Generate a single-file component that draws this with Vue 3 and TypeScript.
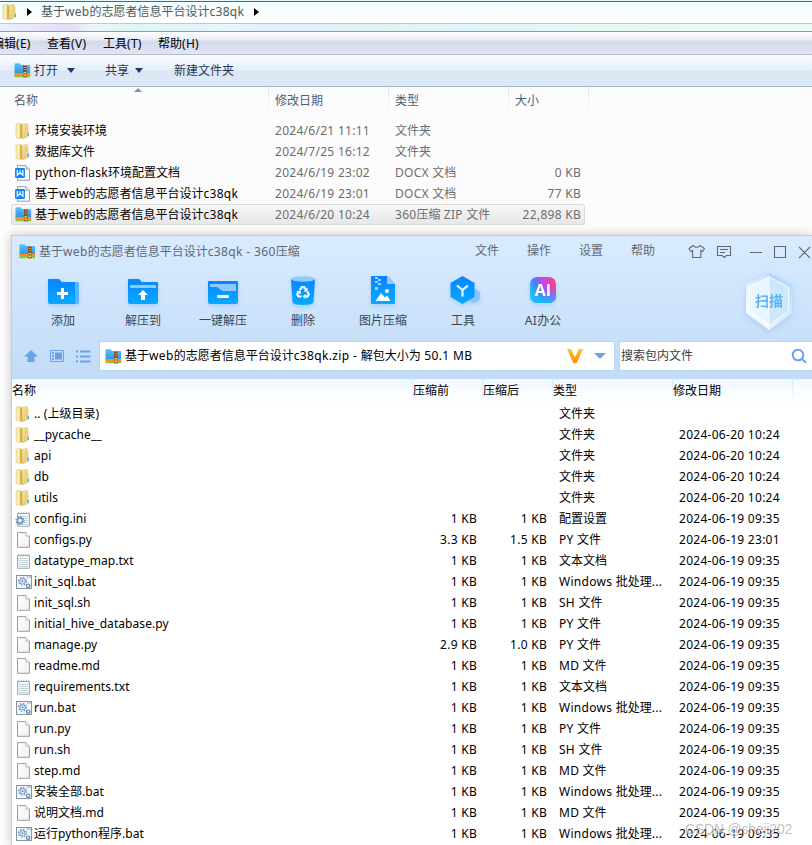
<script setup lang="ts">
import { h, type FunctionalComponent } from 'vue'

type IconKind = 'folder' | 'docx' | 'zip' | 'ini' | 'blank' | 'text' | 'bat'

interface FileRow {
  name: string
  date: string
  type: string
  size: string
  icon: IconKind
}

interface EntryRow {
  icon: IconKind
  name: string
  before: string
  after: string
  type: string
  date: string
}

// Splits a label into Latin and CJK runs so that each gets its own tracking.
const Txt: FunctionalComponent<{ t: string }> = (props) =>
  h(
    'span',
    { class: 'txt' },
    (props.t.match(/[\u2e80-\u9fff]+|[^\u2e80-\u9fff]+/g) ?? []).map((run) =>
      /[\u2e80-\u9fff]/.test(run) ? run : h('span', { class: 'lat' }, run),
    ),
  )
Txt.props = ['t']

const title = '基于web的志愿者信息平台设计c38qk'

const files: FileRow[] = [
  { name: '环境安装环境', date: '2024/6/21 11:11', type: '文件夹', size: '', icon: 'folder' },
  { name: '数据库文件', date: '2024/7/25 16:12', type: '文件夹', size: '', icon: 'folder' },
  { name: 'python-flask环境配置文档', date: '2024/6/19 23:02', type: 'DOCX 文档', size: '0 KB', icon: 'docx' },
  { name: title, date: '2024/6/19 23:01', type: 'DOCX 文档', size: '77 KB', icon: 'docx' },
  { name: title, date: '2024/6/20 10:24', type: '360压缩 ZIP 文件', size: '22,898 KB', icon: 'zip' },
]

const tools = ['添加', '解压到', '一键解压', '删除', '图片压缩', '工具', 'AI办公']

const dir = (name: string, date = '2024-06-20 10:24'): EntryRow => ({
  icon: 'folder', name, before: '', after: '', type: '文件夹', date,
})
const file = (
  icon: IconKind, name: string, type: string,
  before = '1 KB', after = '1 KB', date = '2024-06-19 09:35',
): EntryRow => ({ icon, name, before, after, type, date })

const entries: EntryRow[] = [
  dir('.. (上级目录)', ''),
  dir('__pycache__'),
  dir('api'),
  dir('db'),
  dir('utils'),
  file('ini', 'config.ini', '配置设置'),
  file('blank', 'configs.py', 'PY 文件', '3.3 KB', '1.5 KB', '2024-06-19 23:01'),
  file('text', 'datatype_map.txt', '文本文档'),
  file('bat', 'init_sql.bat', 'Windows 批处理...'),
  file('blank', 'init_sql.sh', 'SH 文件'),
  file('blank', 'initial_hive_database.py', 'PY 文件'),
  file('blank', 'manage.py', 'PY 文件', '2.9 KB', '1.0 KB'),
  file('blank', 'readme.md', 'MD 文件'),
  file('text', 'requirements.txt', '文本文档'),
  file('bat', 'run.bat', 'Windows 批处理...'),
  file('blank', 'run.py', 'PY 文件'),
  file('blank', 'run.sh', 'SH 文件'),
  file('blank', 'step.md', 'MD 文件'),
  file('bat', '安装全部.bat', 'Windows 批处理...'),
  file('blank', '说明文档.md', 'MD 文件'),
  file('bat', '运行python程序.bat', 'Windows 批处理...'),
]
</script>

<template>
  <svg class="defs" width="0" height="0">
    <defs>
      <linearGradient id="gold" x1="0" x2="1">
        <stop offset="0" stop-color="#f6e7a2" /><stop offset=".5" stop-color="#fbf0b8" /><stop offset="1" stop-color="#dcbd5e" />
      </linearGradient>
      <linearGradient id="gold2" x1="0" x2="1" y2="1">
        <stop offset="0" stop-color="#f7eaa8" /><stop offset="1" stop-color="#e0bd58" />
      </linearGradient>
      <linearGradient id="blue" x1="0" x2="0" y1="0" y2="1">
        <stop offset="0" stop-color="#0a84ff" /><stop offset="1" stop-color="#06aaff" />
      </linearGradient>
      <linearGradient id="sky" x1="0" x2="0" y1="0" y2="1">
        <stop offset="0" stop-color="#5cc2f8" /><stop offset="1" stop-color="#2b93e8" />
      </linearGradient>
      <linearGradient id="ai" x1="0" y1=".75" x2="1" y2=".25">
        <stop offset="0" stop-color="#18dcf0" /><stop offset=".38" stop-color="#4b7cf8" /><stop offset=".65" stop-color="#c944e6" /><stop offset="1" stop-color="#fb4382" />
      </linearGradient>
      <linearGradient id="aib" x1="0" y1="0" x2="0" y2="1">
        <stop offset=".45" stop-color="#1fa8ff" stop-opacity="0" /><stop offset="1" stop-color="#1cb8ff" />
      </linearGradient>
      <linearGradient id="vee" x1="0" x2="0" y1="0" y2="1">
        <stop offset="0" stop-color="#ffc52e" /><stop offset="1" stop-color="#ff8c00" />
      </linearGradient>
      <linearGradient id="hexa" x1="0" x2="1" y1="1" y2="0">
        <stop offset="0" stop-color="#ffffff" /><stop offset=".45" stop-color="#e4f2ff" /><stop offset="1" stop-color="#9ad2ff" />
      </linearGradient>
      <linearGradient id="hexb" x1="0" x2="0" y1="0" y2="1">
        <stop offset="0" stop-color="#a9d8fd" /><stop offset="1" stop-color="#e6f4ff" />
      </linearGradient>
      <linearGradient id="paper" x1="0" x2="1" y1="0" y2="1">
        <stop offset="0" stop-color="#fff" /><stop offset="1" stop-color="#f0f0f0" />
      </linearGradient>

      <symbol id="i-folder" viewBox="0 0 16 16">
        <path d="M1 1 5.500.2 6.500 1v13.700l-1 .8L1 14.600z" fill="url(#gold)" stroke="#dcc470" stroke-width=".5" />
        <path d="M5.300 1.500 8 2.600v13.200l-2.700-1.100z" fill="#cdab4b" />
        <path d="M7 1.400 12.300.6v12.600L8 15.700H7z" fill="url(#gold2)" stroke="#d6b75a" stroke-width=".5" />
        <path d="M10.300 3.200 13.500 2.700v11l-3.500 1.500z" fill="#ecd27c" />
        <path d="M12.700 9.700h1.200v3.300h-1.200z" fill="#36a6e8" />
      </symbol>
      <symbol id="i-docx" viewBox="0 0 16 16">
        <path d="M2.500.7h8.500l3.500 3.500v11H2.500z" fill="#fff" stroke="#8e98ad" stroke-linejoin="round" />
        <path d="M11 .7v3.500h3.500" fill="#dfe4ee" stroke="#8e98ad" stroke-width=".8" />
        <rect x="0" y="3" width="10" height="10" rx="1.2" fill="#1687f2" />
        <path d="M2.300 5v5.200l2.800-2.400 2.800 2.400V5M5.100 5.300v2.600" fill="none" stroke="#fff" stroke-width="1.200" />
      </symbol>
      <symbol id="i-zip" viewBox="0 0 17 15">
        <path d="M.5 1.300Q.5.3 1.500.3h4l1.600 1.800h8q1 0 1 1V11H.5z" fill="url(#sky)" />
        <path d="M.5 10h15.600v2H.5z" fill="#ff8b22" /><path d="M.5 12h15.600v2.300H.5z" fill="#8cc63a" />
        <path d="M9.200 2.100h3.300v12.200H9.200z" fill="#80441c" />
        <path d="M10.200 2.500h1.500M10.200 4.500h1.500M10.200 6.500h1.500" stroke="#e6a657" />
        <rect x="9.200" y="8.700" width="3.300" height="4.800" rx="1.200" fill="#f7d06b" stroke="#8a5a20" stroke-width=".6" />
        <path d="M10.900 10v2" stroke="#72410e" stroke-width=".9" />
      </symbol>
      <symbol id="i-blank" viewBox="0 0 16 16">
        <path d="M2.500.6h8.400l3.500 3.500v11.200H2.500z" fill="url(#paper)" stroke="#9b9b9b" />
        <path d="M10.900.8v3.300h3.300" fill="#fff" stroke="#b4b4b4" stroke-width=".9" />
      </symbol>
      <symbol id="i-text" viewBox="0 0 16 16">
        <path d="M2.500 2.500h12v12.800h-12z" fill="#f7fafc" stroke="#a4a9ac" />
        <path d="M3.500 5.500h10M3.500 7.500h10M3.500 9.500h10M3.500 11.500h10M3.500 13.500h10" stroke="#c3d3dc" />
        <path d="M3 3.200l1-2.400M5.500 3.200l1-2.400M8 3.200l1-2.400M10.500 3.200l1-2.400M13 3.200l.8-2" stroke="#9da2a6" stroke-width=".8" />
      </symbol>
      <symbol id="i-ini" viewBox="0 0 16 16">
        <use href="#i-text" width="16" height="16" />
        <circle cx="5" cy="9.500" r="2.600" fill="#dcebf5" stroke="#7d9dbc" stroke-width="1.700" />
        <circle cx="5" cy="9.500" r="4" fill="none" stroke="#5f87ad" stroke-width="1.100" stroke-dasharray="1.500 1.640" />
        <circle cx="5" cy="9.500" r="1.100" fill="#fff" />
      </symbol>
      <symbol id="i-bat" viewBox="0 0 16 14">
        <rect x=".5" y=".5" width="15" height="13" fill="#f4f8fb" stroke="#8796a3" />
        <path d="M11 2h4" stroke="#4a7aa8" stroke-dasharray="1 .7" />
        <circle cx="6.500" cy="6.300" r="2.700" fill="#fff" stroke="#7fa6c9" stroke-width="1.200" />
        <circle cx="6.500" cy="6.300" r="4" fill="none" stroke="#6a96bd" stroke-width="1.100" stroke-dasharray="1.500 1.640" />
        <circle cx="6.500" cy="6.300" r="1" fill="#4c7dab" />
        <circle cx="12.200" cy="10.700" r="1.700" fill="#fff" stroke="#4d80ae" stroke-width="1.200" />
      </symbol>
    </defs>
  </svg>

  <main class="screen">
    <nav class="address">
      <svg class="ico16" viewBox="0 0 16 16"><use href="#i-folder" /></svg>
      <i class="tri-r"></i>
      <Txt class="crumb" :t="title" />
      <i class="tri-r"></i>
    </nav>
    <div class="glass"></div>
    <nav class="menubar">
      <Txt t="编辑(E)" /><Txt t="查看(V)" /><Txt t="工具(T)" /><Txt t="帮助(H)" />
    </nav>
    <div class="commands">
      <svg class="zip" viewBox="0 0 17 15"><use href="#i-zip" /></svg>
      <span class="open">打开</span><i class="tri-d"></i>
      <span class="share">共享</span><i class="tri-d"></i>
      <span class="newdir">新建文件夹</span>
    </div>

    <section class="explorer">
      <div class="fhead">
        <span>名称<i class="sort"></i></span><span>修改日期</span><span>类型</span><span>大小</span>
      </div>
      <div v-for="(f, i) in files" :key="i" class="frow" :class="{ selected: i === 4 }">
        <svg v-if="f.icon === 'zip'" class="zip" viewBox="0 0 17 15"><use href="#i-zip" /></svg>
        <svg v-else class="ico16" viewBox="0 0 16 16"><use :href="'#i-' + f.icon" /></svg>
        <Txt class="fname" :t="f.name" />
        <Txt class="fdate" :t="f.date" />
        <Txt class="ftype" :t="f.type" />
        <Txt class="fsize" :t="f.size" />
      </div>
    </section>

    <section class="archive">
      <div class="chrome">
        <header class="titlebar">
          <svg class="zip" viewBox="0 0 17 15"><use href="#i-zip" /></svg>
          <Txt class="wtitle" :t="title + ' - 360压缩'" />
          <nav class="wmenu"><span>文件</span><span>操作</span><span>设置</span><span>帮助</span></nav>
          <svg class="wctl" width="123" height="16" viewBox="0 0 123 16" fill="none" stroke="#606a75" stroke-width="1.1">
            <path d="M5.200 1.500 1 4.500l1.800 3 1.800-1v7h8.200v-7l1.800 1 1.800-3-4.200-3c-1 2.400-6 2.400-7 0z" />
            <path d="M29.500 2.500h13v9h-4l-2.300 2-2-2h-4.700z M32 5.500h8M32 8.500h5" />
            <path d="M62 8.500h12M86.500 2.500h11v11h-11z M111 3l11 11M122 3l-11 11" />
          </svg>
        </header>

        <div class="tools">
          <div v-for="(t, i) in tools" :key="t" class="tool">
            <svg class="ticon" width="36" height="34" viewBox="0 0 36 34">
              <g v-if="i === 0">
                <path d="M29 7h4q1 0 1 1v19q0 2-2 2h-3z" fill="#59b4ff" />
                <path d="M3 5q0-1 1-1h10l3 3h12q1 0 1 1v21H5q-2 0-2-2z" fill="url(#blue)" />
                <path d="M17.500 13v11M12 18.500h11" stroke="#fff" stroke-width="3" />
              </g>
              <g v-else-if="i === 1">
                <path d="M3 5q0-1 1-1h10l3 3h15q1 0 1 1v19q0 2-2 2H5q-2 0-2-2z" fill="url(#blue)" />
                <path d="M5 13v-2q0-1 1-1h24q1 0 1 1v2z" fill="#8fcbff" />
                <path d="M18 15l5 5h-3v5h-4v-5h-3z" fill="#fff" />
              </g>
              <g v-else-if="i === 2">
                <path d="M3 7q0-1 1-1h28q1 0 1 1v20q0 2-2 2H5q-2 0-2-2z" fill="url(#blue)" />
                <path d="M5 9h25q1 0 1 1v6H19q-2 0-3.500-1.500T12 12H5z" fill="#8ccbff" />
                <rect x="12" y="20" width="12" height="3" rx="1" fill="#fff" />
              </g>
              <g v-else-if="i === 3">
                <path d="M6 4h24l-1.500 23q-.2 3-10.500 3T7.500 27z" fill="url(#blue)" />
                <ellipse cx="18" cy="4" rx="12" ry="2.800" fill="#8dcdfe" />
                <g fill="none" stroke="#fff" stroke-width="2.200">
                  <path d="M14.800 15l2-2.800h2.400l1.700 2.500" />
                  <path d="M22.300 16.500l1.500 2.700-1.200 2.300h-3" />
                  <path d="M16.500 21.500h-3l-1.300-2.200 1.500-2.600" />
                </g>
                <path d="M22.500 12.500v4h-4zM20.500 18.800v5.200l-3-2.600zM11.200 16.400l4-.9 1 3.700z" fill="#fff" />
              </g>
              <g v-else-if="i === 4">
                <path d="M6 2q0-1 1-1h15l8 8v19q0 1-1 1H7q-1 0-1-1z" fill="url(#blue)" />
                <path d="M22 1l8 8h-8z" fill="#8ecbff" />
                <path d="M10 2h3v2h3v2h-3v2h3v2h-3V8h-3V6h3V4h-3zM10 12h3v3h-3z" fill="#9ed3ff" />
                <circle cx="22" cy="16" r="2" fill="#fff" />
                <path d="M10.500 26l5.500-8 4 4.500 2-2L25.500 26z" fill="#fff" />
              </g>
              <g v-else-if="i === 5">
                <path d="M29 13l6 4v7.500L29 28l-6-3z" fill="#86c4fb" />
                <path d="M17.500 1l12 7v14l-12 7-12-7V8z" fill="url(#blue)" />
                <path d="M12 10.500l5.500 4.500 5.500-4.500M17.500 15v6.500" fill="none" stroke="#e8f6ff" stroke-width="2.200" />
              </g>
              <g v-else>
                <rect x="5" y="2" width="26" height="26" rx="7" fill="url(#ai)" />
                <rect x="5" y="2" width="26" height="26" rx="7" fill="url(#aib)" />
                <text x="18" y="21" text-anchor="middle" class="aitext">AI</text>
              </g>
            </svg>
            <Txt class="tlabel" :t="t" />
          </div>
          <svg class="scan" width="56" height="66" viewBox="0 0 56 66">
            <path d="M28 4l23 12v28L28 61 5 44V16z" fill="url(#hexa)" />
            <path d="M28 4l23 12v28L28 61z" fill="url(#hexb)" />
            <path d="M28 8l19.500 10.500V42L28 56 8.500 42V18.500z" fill="#e9f5ff" stroke="#fff" stroke-width="1.200" />
            <path d="M28 8l19.500 10.500V42L28 56z" fill="#cfe7fd" stroke="#eef8ff" stroke-width="1" />
            <text x="28" y="37" text-anchor="middle" class="scantext">扫描</text>
          </svg>
        </div>

        <div class="pathrow">
          <svg class="views" width="74" height="16" viewBox="0 0 74 16">
            <path d="M7 2l7 6.500h-3.500V14h-7V8.500H0z" fill="#6ba0ea" />
            <path d="M26.500 2.500h13v11h-13z" fill="none" stroke="#6ba0ea" />
            <path d="M28 4h2v2h-2zM28 7h2v2h-2zM28 10h2v2h-2zM31 4.500h7v7h-7z" fill="#6ba0ea" />
            <path d="M52 3.500h2M52 8.500h2M52 13.500h2M56 3.500h10.500M56 8.500h10.500M56 13.500h10.500" stroke="#6ba0ea" stroke-width="1.800" />
          </svg>
          <div class="path">
            <svg class="zip" viewBox="0 0 17 15"><use href="#i-zip" /></svg>
            <Txt class="ptext" :t="title + '.zip - 解包大小为 50.1 MB'" />
            <svg class="vee" width="16" height="16" viewBox="0 0 16 16"><path d="M0 1h4.200L8 9.500 11.800 1H16L10 14.500q-2 1.500-4 0z" fill="url(#vee)" /></svg>
            <i class="drop"></i>
          </div>
          <div class="search">
            <span>搜索包内文件</span>
            <svg width="16" height="16" viewBox="0 0 16 16" fill="none" stroke="#6ca1eb" stroke-width="2"><circle cx="7" cy="7" r="5.300" /><path d="M11 11l4 3.800" /></svg>
          </div>
        </div>
      </div>

      <div class="ahead">
        <span>名称</span><span>压缩前</span><span>压缩后</span><span>类型</span><span>修改日期</span><span></span>
      </div>
      <div v-for="e in entries" :key="e.name" class="arow">
        <svg v-if="e.icon === 'bat'" class="ico16 bat" viewBox="0 0 16 14"><use href="#i-bat" /></svg>
        <svg v-else class="ico16" viewBox="0 0 16 16"><use :href="'#i-' + e.icon" /></svg>
        <Txt class="aname" :t="e.name" />
        <Txt class="abefore" :t="e.before" />
        <Txt class="aafter" :t="e.after" />
        <Txt class="atype" :t="e.type" />
        <Txt class="adate" :t="e.date" />
      </div>
    </section>
    <span class="watermark">CSDN @sheji202</span>
  </main>
</template>

<style>
body { overflow: hidden; }
.txt { white-space: pre; }
.lat { letter-spacing: 0.28px; }
.aname .lat { letter-spacing: 0.06px; }
.wtitle .lat, .ptext .lat { letter-spacing: 0.36px; }
</style>

<style scoped>
.defs { position: absolute; }
.screen {
  position: relative;
  width: 812px;
  height: 845px;
  overflow: hidden;
  background: #fcfcfc;
  font: 12px/20px "Noto Sans", "Noto Sans CJK SC", sans-serif;
  color: #000;
}
svg { display: block; flex: none; }
.ico16 { width: 16px; height: 16px; }
.bat { height: 14px; }
.zip { width: 17px; height: 15px; }

.address {
  box-sizing: border-box;
  display: flex;
  align-items: center;
  height: 24px;
  padding: 1px 0 0 2px;
  border-bottom: 1px solid #c0c8c9;
  background: linear-gradient(#e4f8ff 0 1px, #53686b 1px 2px, #f3fffe 2px, #fdfdfd 18px, #fff);
  color: #4d5b5e;
}
.tri-r { border: 4px solid transparent; border-left: 5px solid #000; border-right: 0; margin: 0 9px; }
.crumb { margin-right: 1px; }
.glass {
  height: 7px;
  background: linear-gradient(90deg, #e9f1ff, #e3dcf8 70px, #eaf6fb 90px, #dcf6f7 140px, #e8f5ff 240px, #e0eeff 275px, #e2f4f2 400px, #e0f6ff 460px, #e6f8f4 600px, #ecfaf9);
  border-bottom: 1px solid #8c9da3;
}
.menubar {
  display: flex;
  height: 22px;
  line-height: 24px;
  background: linear-gradient(#fff, #e6ebf4 8px, #d4daec 9px, #e1e5f4);
  border-bottom: 1px solid #b4bad2;
}
.menubar > :nth-child(1) { width: 55px; margin-left: -8px; }
.menubar > :nth-child(2) { width: 56px; }
.menubar > :nth-child(3) { width: 55px; }
.commands {
  box-sizing: border-box;
  display: flex;
  align-items: center;
  height: 32px;
  padding-left: 14px;
  background: linear-gradient(#fbfdff, #e3eefa 15px, #dce6f4 16px, #dcebf8);
  border-bottom: 1px solid #a0b3c8;
  color: #1e395b;
}
.open { width: 33px; margin-left: 3px; }
.share { margin-left: 30px; width: 30px; }
.newdir { margin-left: 31px; }
.tri-d { border: 4px solid transparent; border-top: 5px solid #1c3a63; border-bottom: 0; }

.explorer { height: 148px; }
.fhead {
  display: grid;
  grid-template-columns: 269px 120px 120px 80px;
  height: 33px;
  line-height: 27px;
  color: #4c607a;
}
.fhead span {
  position: relative;
  padding-left: 6px;
  height: 25px;
  border-right: 1px solid;
  border-image: linear-gradient(#d6e5f5, #fcfcfc) 1;
}
.fhead span:first-child { padding-left: 14px; }
.sort { position: absolute; left: 134px; top: 1px; border: 4px solid transparent; border-bottom: 4px solid #6a9bbd; border-top: 0; }
.frow {
  box-sizing: border-box;
  display: flex;
  align-items: center;
  width: 574px;
  height: 21px;
  margin-left: 11px;
  padding-left: 4px;
  color: #6d6d6d;
}
.frow .ico16 { margin-right: 4px; }
.frow .zip { margin-right: 3px; }
.frow.selected { box-shadow: inset 0 0 0 1px #d9d9d9; border-radius: 3px; background: linear-gradient(#f8f8f8, #e6e6e6); }
.fname { width: 240px; color: #000; }
.fdate { width: 120px; }
.ftype { width: 115px; }
.fsize { width: 71px; text-align: right; }

.archive {
  height: 609px;
  margin-left: 11px;
  border-left: 1px solid #b5d2ec;
  border-top: 1px solid #b5d2ec;
  background: #fff;
  box-shadow: 0 0 10px rgba(0, 0, 0, .22);
}
.chrome {
  display: flex;
  flex-direction: column;
  height: 143px;
  background: linear-gradient(#d9ebff, #c2dcf7);
}
.titlebar { display: flex; align-items: center; height: 31px; padding-left: 7px; color: #5f6974; }
.wtitle { width: 436px; margin-left: 3px; }
.wmenu { display: flex; gap: 28px; width: 211px; position: relative; top: -1px; }
.wctl { margin-left: 2px; }
.tools { display: flex; height: 75px; padding-left: 11px; }
.tool { display: flex; flex-direction: column; align-items: center; width: 80px; padding-top: 8px; color: #3c4650; }
.ticon { filter: drop-shadow(0 2px 2px rgba(40, 130, 230, .22)); }
.tlabel { margin-top: 2px; }
.aitext { font: bold 16px "Open Sans", sans-serif; fill: #fff; }
.scan { margin: 2px 0 0 158px; filter: drop-shadow(0 2px 3px rgba(70, 140, 220, .25)); }
.scantext { font: bold 14px "Noto Sans CJK SC", sans-serif; fill: #5bb5f7; }
.pathrow { display: flex; align-items: center; height: 28px; padding-left: 12px; overflow: visible; }
.path { box-sizing: border-box; flex: none; display: flex; align-items: center; width: 516px; height: 30px; margin-left: 1px; padding-left: 5px; background: #fff; border: 1px solid #b8d5f0; }
.ptext { width: 446px; margin-left: 3px; }
.vee { margin-left: -4px; }
.drop { margin-left: 11px; border: 6px solid transparent; border-top: 6px solid #70a3ea; border-bottom: 0; }
.search { box-sizing: border-box; flex: none; display: flex; align-items: center; justify-content: space-between; width: 194px; height: 30px; margin-left: 4px; padding: 0 6px 0 1px; background: #fff; border: 1px solid #b8d5f0; border-right: 0; color: #3c3c3c; }

.ahead {
  display: grid;
  grid-template-columns: 401px 70px 70px 120px 120px 20px;
  height: 24px;
  line-height: 23px;
  background: linear-gradient(#f2f8ff, #fff);
}
.ahead span + span { border-left: 1px solid; border-image: linear-gradient(#d3e5f6, #fff) 1; margin-left: -1px; }
.arow { display: flex; align-items: center; height: 21px; padding-left: 4px; }
.arow .ico16 { position: relative; left: -1px; }
.arow .bat { left: 0; }
.aname { width: 376px; margin-left: 2px; }
.abefore { width: 67px; text-align: right; }
.aafter { width: 70px; text-align: right; }
.atype { width: 120px; margin-left: 12px; }
.watermark {
  position: absolute;
  left: 685px;
  top: 820px;
  font: 14px/18px "Liberation Sans", Arial, sans-serif;
  letter-spacing: -0.2px;
  color: rgba(130, 130, 130, .5);
  text-shadow: 1px 1px 0 rgba(255, 255, 255, .8);
}
</style>
